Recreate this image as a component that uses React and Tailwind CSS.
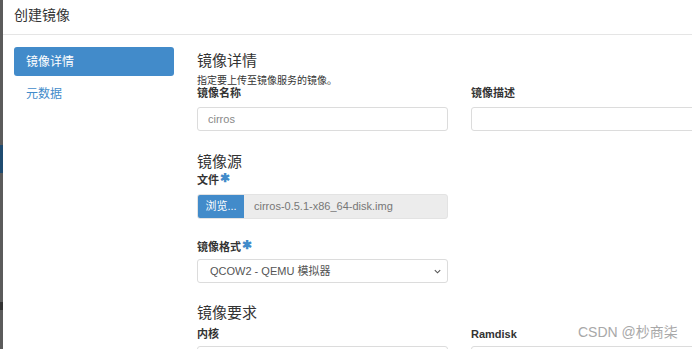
import React from "react";

const font = { fontFamily: '"Liberation Sans", "Noto Sans CJK SC", sans-serif' };

function Label({ children, star }) {
  return (
    <div className="text-[11px] leading-[13px] font-bold text-[#333]">
      {children}
      {star && <span className="text-[#428bca] text-[12px] ml-[1px] relative top-[-2px]">✱</span>}
    </div>
  );
}

export default function App() {
  return (
    <div className="relative flex w-[692px] h-[349px] overflow-hidden bg-white" style={font}>
      <div className="flex flex-col w-[3px] shrink-0 bg-[#5b5b5b]">
        <div className="h-[145px] shrink-0" />
        <div className="h-[28px] shrink-0 bg-[#1f4b70]" />
        <div className="h-[129px] shrink-0" />
        <div className="h-[8px] shrink-0 bg-[#333]" />
      </div>
      <div className="flex-1 flex flex-col min-w-0">
        <div className="h-[35px] shrink-0 border-b border-[#e5e5e5] pl-[11px] pt-[6px]">
          <div className="text-[14px] leading-[18px] text-[#333]">创建镜像</div>
        </div>
        <div className="flex shrink-0">
          <div className="w-[160px] ml-[11px] mt-[12px] shrink-0">
            <div className="h-[29px] rounded-[3px] bg-[#428bca] flex items-center pl-[12px] text-[12px] text-white">
              镜像详情
            </div>
            <div className="h-[35px] flex items-center pl-[12px] text-[12px] text-[#428bca]">元数据</div>
          </div>
          <div className="ml-[23px] flex-1 min-w-0">
            <div className="mt-[16px] text-[15px] leading-[20px] text-[#333]">镜像详情</div>
            <div className="mt-[3px] text-[10px] leading-[13px] text-[#333]">指定要上传至镜像服务的镜像。</div>
            <div className="grid grid-cols-[251px_251px] gap-x-[23px]">
              <div>
                <Label>镜像名称</Label>
                <div className="mt-[7px] h-[24px] border border-[#dcdcdc] rounded-[3px] flex items-center pl-[10px] text-[11px] text-[#888]">
                  cirros
                </div>
              </div>
              <div>
                <Label>镜像描述</Label>
                <div className="mt-[7px] h-[24px] border border-[#dcdcdc] rounded-[3px]" />
              </div>
            </div>
            <div className="mt-[21px] text-[15px] leading-[20px] text-[#333]">镜像源</div>
            <div className="mt-[2px] w-[251px]">
              <Label star>文件</Label>
              <div className="mt-[7px] h-[25px] flex rounded-[3px] overflow-hidden bg-[#ececec] border border-[#e3e3e3]">
                <div className="w-[46px] bg-[#428bca] text-white text-[11px] flex items-center justify-center">浏览...</div>
                <div className="flex items-center pl-[10px] text-[11px] text-[#777]">cirros-0.5.1-x86_64-disk.img</div>
              </div>
            </div>
            <div className="mt-[22px] w-[251px]">
              <Label star>镜像格式</Label>
              <div className="mt-[5px] h-[24px] border border-[#dcdcdc] rounded-[3px] flex items-center justify-between pl-[12px] pr-[5px] text-[11px] text-[#555]">
                <span>QCOW2 - QEMU 模拟器</span>
                <svg width="9" height="9" viewBox="0 0 10 10" fill="none" stroke="#555" strokeWidth="1.2">
                  <path d="M2 3.5 L5 6.5 L8 3.5" />
                </svg>
              </div>
            </div>
            <div className="mt-[20px] text-[15px] leading-[20px] text-[#333]">镜像要求</div>
            <div className="mt-[5px] grid grid-cols-[251px_251px] gap-x-[23px]">
              <div>
                <Label>内核</Label>
                <div className="mt-[5px] h-[24px] border border-[#dcdcdc] rounded-[3px]" />
              </div>
              <div>
                <Label>Ramdisk</Label>
                <div className="mt-[5px] h-[24px] border border-[#dcdcdc] rounded-[3px]" />
              </div>
            </div>
          </div>
        </div>
      </div>
      <div className="absolute left-[578px] top-[323px] text-[14px] leading-[18px] text-[#a8a8a8]">CSDN @杪商柒</div>
    </div>
  );
}
